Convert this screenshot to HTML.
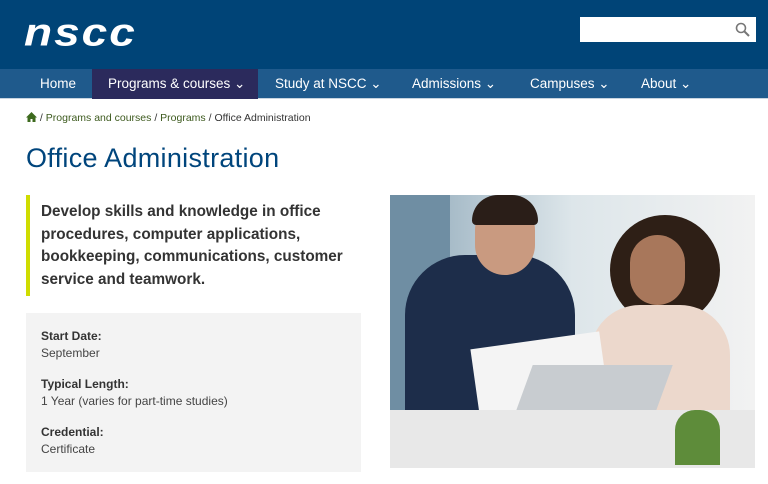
<!DOCTYPE html>
<html><head><style>
*{margin:0;padding:0;box-sizing:border-box}
body{width:768px;height:484px;overflow:hidden;background:#fff;font-family:"Liberation Sans",sans-serif;position:relative}
.hdr{position:absolute;left:0;top:0;width:768px;height:69px;background:#004477}
.logo{position:absolute;left:24px;top:2px;color:#fff;font:italic bold 46px "Liberation Sans",sans-serif;letter-spacing:2px;transform:scaleY(0.85);transform-origin:top left;margin-top:7px}
.search{position:absolute;left:580px;top:17px;width:176px;height:25px;background:#fff}
.nav{position:absolute;left:0;top:69px;width:768px;height:30px;background:#1f5a8c;border-bottom:1px solid #c8d4e0}
.nav span{position:absolute;top:7px;color:#fff;font-size:13.5px}
.act{position:absolute;left:92px;top:0;width:166px;height:30px;background:#2b2a5c}
.bc{position:absolute;left:26px;top:112px;font-size:10.5px;color:#333}
.bc a{color:#3d5a1e;text-decoration:none}
h1{position:absolute;left:26px;top:143px;font-size:27px;color:#00457c;font-weight:normal;letter-spacing:0.3px}
.lead{position:absolute;left:26px;top:195px;height:101px;border-left:4px solid #cfdc00;padding-left:11px;width:330px;font-size:15.3px;line-height:22.5px;color:#333;font-weight:bold;padding-top:6px}
.box{position:absolute;left:26px;top:313px;width:335px;height:159px;background:#f3f3f3;padding:15px 15px;font-size:12px;color:#444;line-height:17px}
.box b{color:#333}
.box p{margin-bottom:14px}
.photo{position:absolute;left:390px;top:195px;width:365px;height:273px;overflow:hidden;background:linear-gradient(90deg,#8da7b8,#dde6ea 50%,#f2f2f2)}
</style></head><body>
<div class="hdr"><div class="logo">nscc</div>
<div class="search"><svg style="position:absolute;right:6px;top:5px" width="15" height="15"><circle cx="6" cy="6" r="4.5" stroke="#777" stroke-width="1.6" fill="none"/><line x1="9.5" y1="9.5" x2="14" y2="14" stroke="#777" stroke-width="2"/></svg></div></div>
<div class="nav"><div class="act"></div>
<span style="left:40px">Home</span>
<span style="left:108px">Programs &amp; courses ⌄</span>
<span style="left:275px">Study at NSCC ⌄</span>
<span style="left:412px">Admissions ⌄</span>
<span style="left:530px">Campuses ⌄</span>
<span style="left:641px">About ⌄</span></div>
<div class="bc"><svg width="11" height="10" style="vertical-align:-1px"><path d="M0 5.5L5.5 0L11 5.5H9.5V10H6.5V7H4.5V10H1.5V5.5Z" fill="#3d6a1e"/></svg> / <a>Programs and courses</a> / <a>Programs</a> / Office Administration</div>
<h1>Office Administration</h1>
<div class="lead">Develop skills and knowledge in office procedures, computer applications, bookkeeping, communications, customer service and teamwork.</div>
<div class="box"><p><b>Start Date:</b><br>September</p><p><b>Typical Length:</b><br>1 Year (varies for part-time studies)</p><p><b>Credential:</b><br>Certificate</p></div>
<div class="photo">
<div style="position:absolute;left:0;top:0;width:60px;height:273px;background:#6f8ea3"></div>
<div style="position:absolute;left:15px;top:60px;width:170px;height:230px;background:#1d2d4a;border-radius:60px 60px 0 0"></div>
<div style="position:absolute;left:85px;top:5px;width:60px;height:75px;background:#c99a80;border-radius:30px"></div>
<div style="position:absolute;left:82px;top:0;width:66px;height:30px;background:#2a1e18;border-radius:30px 30px 5px 5px"></div>
<div style="position:absolute;left:220px;top:20px;width:110px;height:110px;background:#2e1f16;border-radius:55px"></div>
<div style="position:absolute;left:240px;top:40px;width:55px;height:70px;background:#a8775b;border-radius:28px"></div>
<div style="position:absolute;left:200px;top:110px;width:140px;height:180px;background:#ecd8cc;border-radius:50px 50px 0 0"></div>
<div style="position:absolute;left:85px;top:145px;width:130px;height:75px;background:#f4f4f4;transform:rotate(-8deg)"></div>
<div style="position:absolute;left:130px;top:170px;width:140px;height:70px;background:#c8ccd0;transform:skewX(-20deg)"></div>
<div style="position:absolute;left:0;top:215px;width:365px;height:58px;background:#e8e8e8"></div>
<div style="position:absolute;left:285px;top:215px;width:45px;height:55px;background:#5e8c3a;border-radius:20px 20px 0 0"></div>
</div>
</body></html>
